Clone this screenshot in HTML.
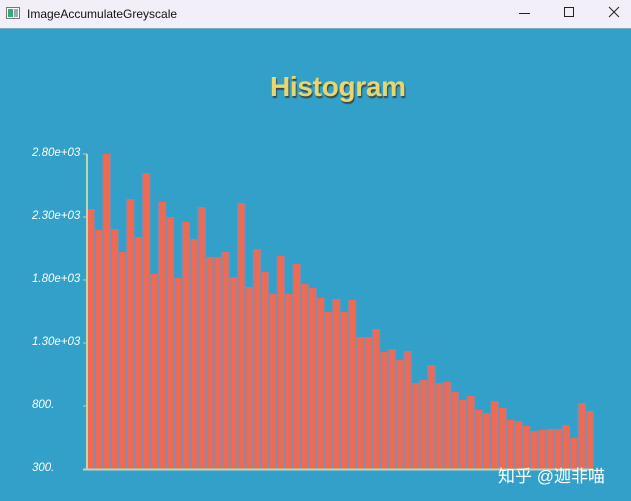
<!DOCTYPE html>
<html><head><meta charset="utf-8"><style>
body{margin:0;width:631px;height:501px;overflow:hidden;background:#33a0c9;font-family:"Liberation Sans",sans-serif;position:relative}
.tb{position:absolute;left:0;top:0;width:631px;height:28px;background:#f3eff8;border-bottom:1px solid #7ab;}
.tb span{position:absolute;left:27px;top:7px;font-size:12px;color:#111}
.lbl{position:absolute;left:32px;color:#fff;font-style:italic;font-size:11.5px}
</style></head><body>
<div class="tb">
<svg width="16" height="14" style="position:absolute;left:6px;top:7px"><rect x="0.5" y="0.5" width="13" height="11" fill="#fff" stroke="#777"/><rect x="2" y="2" width="5" height="8" fill="#3a7"/><rect x="8" y="2" width="4" height="8" fill="#9ab"/></svg>
<span>ImageAccumulateGreyscale</span>
<svg width="120" height="28" style="position:absolute;left:511px;top:0"><line x1="8" y1="13.5" x2="19" y2="13.5" stroke="#222"/><rect x="53.5" y="7.5" width="9" height="9" fill="none" stroke="#222"/><path d="M98 7 L108 17 M108 7 L98 17" stroke="#222"/></svg>
</div>
<div style="position:absolute;left:270px;top:71px;font-size:28px;font-weight:bold;color:#e6d774;text-shadow:1px 2px 1px #3b4a45;letter-spacing:-0.3px">Histogram</div>
<div class="lbl" style="top:147px">2.80e+03</div>
<div class="lbl" style="top:210px">2.30e+03</div>
<div class="lbl" style="top:273px">1.80e+03</div>
<div class="lbl" style="top:336px">1.30e+03</div>
<div class="lbl" style="top:399px">800.</div>
<div class="lbl" style="top:462px">300.</div>
<svg id="ch" width="631" height="501" style="position:absolute;left:0;top:0"></svg>
<div style="position:absolute;left:498px;top:462px;color:#fff;font-size:17px;font-family:'Liberation Sans','Noto Sans CJK SC',sans-serif">知乎 @迦非喵</div>
<script>
var t=[209,230,154,229,252,199,237,173,274,202,217,278,222,239,207,257,257,252,277,203,287,249,272,294,256,294,264,284,288,298,312,299,312,300,337,337,329,352,349,360,351,383,380,365,383,382,392,400,396,410,413,401,408,420,421,426,431,430,429,429,425,438,403,411];
var s='';
for(var i=0;i<t.length;i++){var x=88+i*7.92;s+='<rect x="'+(x-1.5)+'" y="'+t[i]+'" width="8.5" height="'+(469-t[i])+'" fill="#8a8aa8"/><rect x="'+x+'" y="'+t[i]+'" width="5.8" height="'+(469-t[i])+'" fill="#ef6a52"/>';}
s+='<line x1="87" y1="154" x2="87" y2="470" stroke="#b9d9b2" stroke-width="2"/><line x1="83" y1="469.5" x2="593" y2="469.5" stroke="#b9d9b2" stroke-width="2"/>';
[154,217,280,343,406].forEach(function(y){s+='<line x1="83" y1="'+y+'" x2="87" y2="'+y+'" stroke="#b9d9b2"/>';});
document.getElementById('ch').innerHTML=s;
</script>
</body></html>
